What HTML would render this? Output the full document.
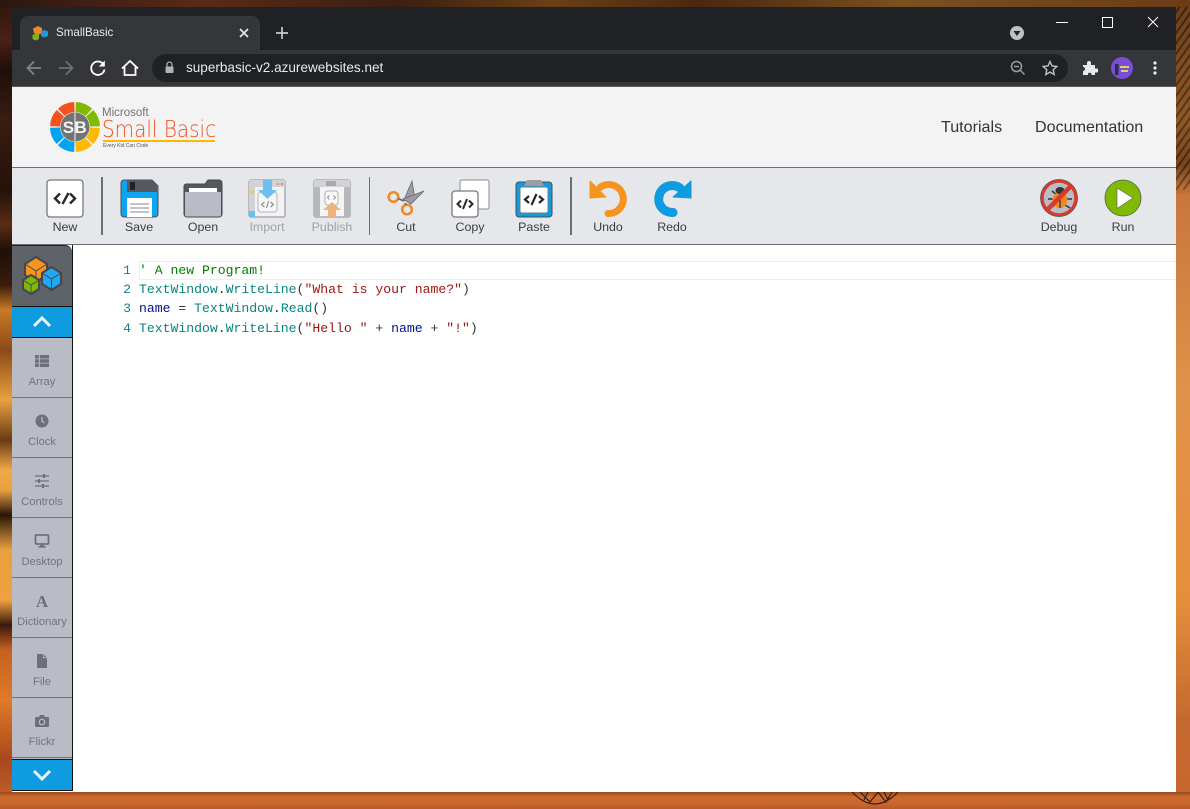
<!DOCTYPE html>
<html lang="en"><head><meta charset="utf-8"><title>SmallBasic</title>
<style>
html,body{margin:0;padding:0;width:1190px;height:809px;overflow:hidden;font-family:"Liberation Sans",sans-serif}
body{position:relative;background:#c8662e}
.a{position:absolute}
.lbl{position:absolute;top:220px;width:64px;text-align:center;font-size:12.4px;line-height:14px;color:#3a3d42}
.dis{color:#a0a2a6}
.sep{position:absolute;background:#6b6e73;top:177px;height:58px}
.item{position:absolute;left:12px;width:60px;height:59px;background:#b9bcc4;border-bottom:1px solid #70747c;text-align:center;color:#70747c;font-size:11.2px}
.item span{position:absolute;left:0;right:0;top:38px;line-height:13px}
.item svg{position:absolute;left:21px;top:15px}
.code{position:absolute;left:139px;font:13.14px/19px "Liberation Mono",monospace;white-space:pre;color:#333}
.num{position:absolute;left:100px;width:31px;text-align:right;font:13.14px/19px "Liberation Mono",monospace;color:#237893}
.g{color:#008000}.t{color:#098580}.s{color:#a31515}.n{color:#001188}
</style></head><body>
<!-- wallpaper -->
<div class="a" style="left:0;top:0;width:12px;height:809px;background:linear-gradient(#2a1710 0,#4a2016 40px,#1e0f0a 70px,#3a1c12 120px,#241209 190px,#5a2c14 225px,#1e0f0a 250px,#3a1c0c 285px,#c87a26 310px,#8a4a18 350px,#e8a040 400px,#6a3a14 440px,#f0a848 470px,#e8a040 490px,#2a1608 515px,#e8a040 550px,#f0a040 600px,#3a1a0c 625px,#c4621f 650px,#e07a28 700px,#a8481c 760px,#c8662e 809px)"></div>
<div class="a" style="left:1176px;top:0;width:14px;height:809px;background:linear-gradient(#4a2a14 0,#7a4a20 120px,#5a3014 165px,#c8763c 195px,#e2934a 400px,#e58e3a 600px,#c46a30 720px,#c8662e 809px)"></div>
<div class="a" style="left:1176px;top:0;width:14px;height:190px;background:repeating-linear-gradient(125deg,rgba(30,12,4,.3) 0 2px,rgba(230,150,70,.2) 2px 6px)"></div>
<div class="a" style="left:0;top:0;width:1190px;height:7px;background:linear-gradient(90deg,#2a1710,#5a2a18 200px,#3a2012 400px,#6a4016 550px,#4a2810 700px,#7a5020 900px,#6a3c18 1190px)"></div>
<div class="a" style="left:0;top:792px;width:1190px;height:17px;background:linear-gradient(#9a4a1c,#cc6c30 5px,#c8662e 12px,#b85a28)"></div>
<svg class="a" style="left:840px;top:792px" width="70" height="17"><path d="M12 0Q35 24 58 0M20 0l10 10 8-10 8 10 6-10M28 0l-4 8M44 0l4 8" fill="none" stroke="#3a1a10" stroke-width="1.200"/></svg>

<!-- browser chrome -->
<div class="a" style="left:12px;top:7px;width:1164px;height:43px;background:#202124"></div>
<div class="a" style="left:20px;top:16px;width:240px;height:34px;background:#35363a;border-radius:8px 8px 0 0"></div>
<svg class="a" style="left:31px;top:25px" width="18" height="16"><path d="M2 3.500l5-2.500 4 2v5l-4 2-4-2z" fill="#e88a2a"/><path d="M10 6.500l3.500-1.500 3.500 1.500v4.500l-3.500 1.500-3.500-1.500z" fill="#1c9ce0"/><path d="M1.500 10l3.200-1.500L8 10v4l-3.300 1.500L1.500 14z" fill="#7ab51d"/></svg>
<div class="a" style="left:56px;top:25px;font-size:11.600px;line-height:16px;color:#e8eaed">SmallBasic</div>
<svg class="a" style="left:238px;top:27px" width="12" height="12"><path d="M2 2l8 8M10 2l-8 8" stroke="#e8eaed" stroke-width="1.600"/></svg>
<svg class="a" style="left:275px;top:26px" width="14" height="14"><path d="M7 1v12M1 7h12" stroke="#c8cacd" stroke-width="1.700"/></svg>
<svg class="a" style="left:1010px;top:26px" width="14" height="14"><circle cx="7" cy="7" r="7" fill="#bdc1c6"/><path d="M3.500 5h7L7 10z" fill="#202124"/></svg>
<div class="a" style="left:1056px;top:22px;width:12px;height:1px;background:#fff"></div>
<div class="a" style="left:1102px;top:17px;width:9px;height:9px;border:1px solid #fff"></div>
<svg class="a" style="left:1147px;top:16px" width="12" height="12"><path d="M1 1l10 10M11 1l-10 10" stroke="#fff" stroke-width="1"/></svg>

<div class="a" style="left:12px;top:50px;width:1164px;height:36px;background:#35363a"></div>
<div class="a" style="left:12px;top:86px;width:1164px;height:1px;background:#5a5c60"></div>
<svg class="a" style="left:24px;top:58px" width="20" height="20"><path d="M17 10H4M10 3.500L3.500 10l6.500 6.500" fill="none" stroke="#808488" stroke-width="1.800"/></svg>
<svg class="a" style="left:56px;top:58px" width="20" height="20"><path d="M3 10h13M10 3.500l6.500 6.500-6.500 6.500" fill="none" stroke="#6d7074" stroke-width="1.800"/></svg>
<svg class="a" style="left:88px;top:58px" width="20" height="20"><path d="M15.500 6.500A6.700 6.700 0 1 0 16.500 11.500" fill="none" stroke="#fff" stroke-width="1.800"/><path d="M16.800 2.500v6h-6z" fill="#fff"/></svg>
<svg class="a" style="left:120px;top:58px" width="20" height="20"><path d="M2 10.500L10 3l8 7.500M4.500 9v8h11V9" fill="none" stroke="#fff" stroke-width="1.800"/></svg>
<div class="a" style="left:152px;top:54px;width:916px;height:28px;border-radius:14px;background:#202124"></div>
<svg class="a" style="left:164px;top:61px" width="11" height="13"><rect x="1.500" y="5.500" width="8" height="6.500" rx="1" fill="#b0b3b7"/><path d="M3 6V3.500a2.500 2.500 0 0 1 5 0V6" fill="none" stroke="#b0b3b7" stroke-width="1.200"/></svg>
<div class="a" style="left:186px;top:60px;font-size:13.55px;line-height:16px;color:#e8eaed">superbasic-v2.azurewebsites.net</div>
<svg class="a" style="left:1010px;top:60px" width="16" height="16"><circle cx="6.500" cy="6.500" r="5" fill="none" stroke="#9a9da1" stroke-width="1.500"/><path d="M4 6.500h5M10.500 10.500l4 4" stroke="#9a9da1" stroke-width="1.500"/></svg>
<svg class="a" style="left:1042px;top:60px" width="16" height="16"><path d="M8 1.500l2 4.500 4.800.5-3.600 3.200 1 4.800L8 12.100l-4.200 2.400 1-4.800L1.200 6.500 6 6z" fill="none" stroke="#bdc1c6" stroke-width="1.400"/></svg>
<svg class="a" style="left:1082px;top:60px" width="16" height="16"><path d="M1 5h4V3a2 2 0 0 1 4 0v2h4v3.500h1.500a2 2 0 0 1 0 4H13V15H9.500v-1a1.800 1.800 0 0 0-3.500 0v1H1v-4a2 2 0 0 0 0-4z" fill="#e8eaed"/></svg>
<svg class="a" style="left:1111px;top:57px" width="22" height="22"><circle cx="11" cy="11" r="11" fill="#7c4ddb"/><rect x="4" y="7" width="3.500" height="11" fill="#2c2f4a"/><rect x="9" y="9" width="9" height="2" fill="#d8d860"/><rect x="10" y="13" width="7" height="2" fill="#d8d860"/></svg>
<svg class="a" style="left:1152px;top:60px" width="6" height="16"><circle cx="3" cy="3" r="1.600" fill="#e8eaed"/><circle cx="3" cy="8" r="1.600" fill="#e8eaed"/><circle cx="3" cy="13" r="1.600" fill="#e8eaed"/></svg>

<!-- page header -->
<div class="a" style="left:12px;top:87px;width:1164px;height:80px;background:#f3f3f4"></div>
<svg class="a" style="left:50px;top:102px" width="50" height="50" viewBox="0 0 50 50">
<g fill="none" stroke-width="10" stroke-dasharray="14.400 111.260">
<circle cx="25" cy="25" r="20" stroke="#ffb900" transform="rotate(2 25 25)"/>
<circle cx="25" cy="25" r="20" stroke="#ffb900" transform="rotate(47 25 25)"/>
<circle cx="25" cy="25" r="20" stroke="#00a4ef" transform="rotate(92 25 25)"/>
<circle cx="25" cy="25" r="20" stroke="#00a4ef" transform="rotate(137 25 25)"/>
<circle cx="25" cy="25" r="20" stroke="#f4511e" transform="rotate(182 25 25)"/>
<circle cx="25" cy="25" r="20" stroke="#f4511e" transform="rotate(227 25 25)"/>
<circle cx="25" cy="25" r="20" stroke="#7fba00" transform="rotate(272 25 25)"/>
<circle cx="25" cy="25" r="20" stroke="#7fba00" transform="rotate(317 25 25)"/>
</g>
<circle cx="25" cy="25" r="14.500" fill="#737373"/>
<text x="25" y="31" text-anchor="middle" font-family="Liberation Sans" font-size="17" font-weight="bold" fill="#f3f3f4" letter-spacing="0.500">SB</text>
<path d="M25 11v28" stroke="#f3f3f4" stroke-width="1"/>
</svg>
<div class="a" style="left:102px;top:107px;font-size:11.500px;line-height:13px;color:#737373">Microsoft</div>
<div class="a" style="left:102px;top:114px;font:23.500px/30px 'DejaVu Sans',sans-serif;color:#f4511e;white-space:nowrap;transform-origin:0 0;transform:scaleX(.85);font-weight:200">Small Basic</div>
<div class="a" style="left:103px;top:140px;width:112px;height:2px;background:#ffb900"></div>
<div class="a" style="left:103px;top:143px;font-size:5px;line-height:6px;color:#555;white-space:nowrap">Every Kid Can Code</div>
<div class="a" style="left:941px;top:118px;font-size:16.100px;line-height:18px;color:#333">Tutorials</div>
<div class="a" style="left:1035px;top:118px;font-size:16.100px;line-height:18px;color:#333">Documentation</div>

<!-- toolbar -->
<div class="a" style="left:12px;top:167px;width:1164px;height:76px;background:#e5e7ea;border-top:1px solid #6b6e73;border-bottom:1px solid #6b6e73"></div>
<div class="sep" style="left:101px;width:2px"></div>
<div class="sep" style="left:369px;width:1px"></div>
<div class="sep" style="left:570px;width:2px"></div>

<svg class="a" style="left:0;top:167px" width="1190" height="60" viewBox="0 167 1190 60">
<!-- New -->
<rect x="47" y="180" width="36" height="37" rx="3" fill="#fff" stroke="#75787d" stroke-width="1.300"/>
<path d="M60 193.500l-5 5 5 5M70 193.500l5 5-5 5M68.500 193l-6 11" fill="none" stroke="#26282c" stroke-width="2.400"/>
<!-- Save -->
<path d="M124 180h28l6 6v28a3 3 0 0 1-3 3h-31a3 3 0 0 1-3-3v-31a3 3 0 0 1 3-3z" fill="#0ea5f0" stroke="#4b4e54"/>
<path d="M127 180h25l5 5.500V192h-30z" fill="#55585e"/><rect x="130" y="182" width="5" height="8" fill="#222"/>
<rect x="127" y="198" width="25" height="19" fill="#fff"/><path d="M130 204h19M130 208h19M130 212h19" stroke="#9a9da2" stroke-width="1.200"/>
<!-- Open -->
<path d="M186 184h19l3-4h11a3 3 0 0 1 3 3v31a3 3 0 0 1-3 3h-32a3 3 0 0 1-3-3v-27a3 3 0 0 1 2-3z" fill="#55585e" stroke="#44474c"/>
<rect x="189" y="188" width="28" height="4" fill="#fff"/>
<path d="M185 192h36v23a1.500 1.500 0 0 1-1.500 1.500h-33a1.500 1.500 0 0 1-1.500-1.500z" fill="#b9bcc4"/>
<!-- Import -->
<rect x="249" y="180" width="36" height="37" rx="2" fill="#f2f2f3" stroke="#a9abaf" stroke-width="1.500"/>
<rect x="249" y="180" width="36" height="7" fill="#d2d3d6"/><rect x="249" y="187" width="6" height="30" fill="#d2d3d6"/><rect x="249" y="211" width="6" height="6" fill="#6cc0ee"/><rect x="250" y="190" width="4" height="4" fill="#edc488"/><circle cx="278" cy="184" r="1.300" fill="#d8a0a0"/><circle cx="282" cy="184" r="1.300" fill="#e08a8a"/>
<rect x="258" y="192" width="19" height="20" rx="3" fill="#f7f7f8" stroke="#b5b7bb"/>
<path d="M263 180h9v10h5l-9.500 9-9.500-9h5z" fill="#6cc0ee"/>
<path d="M264.500 202l-3 2.500 3 2.500M270.500 202l3 2.500-3 2.500M268.500 201l-2 7" fill="none" stroke="#8d8f93" stroke-width="1.200"/>
<!-- Publish -->
<rect x="314" y="180" width="36" height="37" rx="2" fill="#f4f4f5" stroke="#a9abaf" stroke-width="1.500"/>
<rect x="314" y="180" width="36" height="7" fill="#d2d3d6"/><rect x="326" y="181" width="10" height="5" fill="#a8aaae"/><rect x="314" y="187" width="6" height="30" fill="#b5b7ba"/><rect x="344" y="187" width="6" height="30" fill="#b5b7ba"/>
<rect x="325" y="191" width="13" height="14" rx="3" fill="#fbfbfc" stroke="#b0b2b6"/>
<path d="M329.500 195.500l-2 2 2 2M333.500 195.500l2 2-2 2" fill="none" stroke="#8d8f93" stroke-width="1"/>
<path d="M332 202l9 8h-5v7h-8v-7h-5z" fill="#edb47d"/>
<!-- Cut -->
<path d="M403.500 201L412 181l2.500 15z" fill="#9b9da2" stroke="#66696e" stroke-width=".8"/>
<path d="M403 199l21-8-13 13z" fill="#9b9da2" stroke="#66696e" stroke-width=".8"/>
<circle cx="393.500" cy="197" r="4.800" fill="#e5e7ea" stroke="#ee8a1f" stroke-width="2.500"/>
<circle cx="407" cy="209.500" r="4.800" fill="#e5e7ea" stroke="#ee8a1f" stroke-width="2.500"/>
<path d="M398 198.500l6 2.500M405 203l1 2" stroke="#66696e" stroke-width="1.500"/>
<!-- Copy -->
<rect x="460" y="180" width="29" height="29" rx="2" fill="#fff" stroke="#888b90"/>
<rect x="452" y="191" width="26" height="26" rx="3" fill="#fff" stroke="#75787d" stroke-width="1.300"/>
<path d="M461 200.500l-3.500 3.500 3.500 3.500M469 200.500l3.500 3.500-3.500 3.500M467 199l-4 10" fill="none" stroke="#26282c" stroke-width="2"/>
<!-- Paste -->
<rect x="516" y="182" width="36" height="35" rx="3" fill="#0f9be0" stroke="#4b4e54"/>
<rect x="520" y="187" width="28" height="26" rx="2" fill="#fff" stroke="#75787d"/>
<path d="M524 186l3-6h14l3 6z" fill="#9a9da2"/>
<path d="M529 196l-4 3.500 4 3.500M539 196l4 3.500-4 3.500M536.500 194l-5 11" fill="none" stroke="#26282c" stroke-width="2.200"/>
<!-- Undo -->
<path d="M600 187.500A14.500 14.500 0 1 1 608 213.500" fill="none" stroke="#f7941d" stroke-width="7" stroke-linecap="round"/>
<path d="M590 181l16 16-16 1z" fill="#f7941d" stroke="#f7941d" stroke-linejoin="round"/>
<!-- Redo -->
<path d="M680 188A13.500 13.500 0 1 0 673 212.500" fill="none" stroke="#0f9be0" stroke-width="9" stroke-linecap="round"/>
<path d="M691 181l-18 16 18 1z" fill="#0f9be0" stroke="#0f9be0" stroke-linejoin="round"/>
<!-- Debug -->
<circle cx="1059" cy="198" r="17" fill="#b9bcc4" stroke="#d93a2b" stroke-width="3.500"/>
<circle cx="1059" cy="198" r="18.500" fill="none" stroke="#55585e" stroke-width=".7"/>
<path d="M1052 191l5 4M1068 191l-5 4M1048 199h6M1072 199h-6M1050 208l5-3M1070 208l-5-3" stroke="#333" stroke-width="1.500"/>
<ellipse cx="1060" cy="200" rx="7.500" ry="8" fill="#ee8a1f"/><ellipse cx="1060" cy="190.500" rx="4.500" ry="3.500" fill="#333"/>
<path d="M1060 193v15" stroke="#333" stroke-width="1.300"/>
<path d="M1047 210l24-24" stroke="#d93a2b" stroke-width="4.500"/>
<!-- Run -->
<circle cx="1123" cy="198" r="18" fill="#7fba00" stroke="#55585e" stroke-width=".8"/>
<path d="M1117 188l16 10-16 10.500z" fill="#fff" stroke="#66696e" stroke-width=".7"/>
</svg>

<div class="lbl" style="left:33px">New</div>
<div class="lbl" style="left:107px">Save</div>
<div class="lbl" style="left:171px">Open</div>
<div class="lbl dis" style="left:235px">Import</div>
<div class="lbl dis" style="left:300px">Publish</div>
<div class="lbl" style="left:374px">Cut</div>
<div class="lbl" style="left:438px">Copy</div>
<div class="lbl" style="left:502px">Paste</div>
<div class="lbl" style="left:576px">Undo</div>
<div class="lbl" style="left:640px">Redo</div>
<div class="lbl" style="left:1027px">Debug</div>
<div class="lbl" style="left:1091px">Run</div>

<!-- editor -->
<div class="a" style="left:12px;top:245px;width:1164px;height:547px;background:#fff"></div>
<div class="a" style="left:139px;top:261px;width:1036px;height:17px;border:1px solid #eeeeee;border-right:0"></div>
<div class="num" style="top:261px">1</div><div class="code g" style="top:261px">' A new Program!</div>
<div class="num" style="top:280px">2</div><div class="code" style="top:280px"><span class="t">TextWindow</span>.<span class="t">WriteLine</span>(<span class="s">"What is your name?"</span>)</div>
<div class="num" style="top:299px">3</div><div class="code" style="top:299px"><span class="n">name</span> = <span class="t">TextWindow</span>.<span class="t">Read</span>()</div>
<div class="num" style="top:319px">4</div><div class="code" style="top:319px"><span class="t">TextWindow</span>.<span class="t">WriteLine</span>(<span class="s">"Hello "</span> + <span class="n">name</span> + <span class="s">"!"</span>)</div>

<!-- sidebar -->
<div class="a" style="left:12px;top:245px;width:60px;height:61px;background:#5e6269;border-top-right-radius:7px;border-top:1px solid #222;box-sizing:border-box"></div>
<svg class="a" style="left:22px;top:255px" width="42" height="42" viewBox="0 0 42 42">
<g stroke="#44474c" stroke-linejoin="round">
<path d="M3 9L14 2l11 7v11l-11 7-11-7z" fill="#f7941d" stroke-width="2"/><path d="M3 9l11 7 11-7M14 16v11" fill="none" stroke-width="1"/>
<path d="M20 18l9.500-6 9.500 6v11l-9.500 6-9.500-6z" fill="#1fa9f5" stroke-width="2"/><path d="M20 18l9.500 6 9.500-6M29.500 24v11" fill="none" stroke-width="1"/>
<path d="M1 25l8-5 8 5v9l-8 5-8-5z" fill="#7fba00" stroke-width="2"/><path d="M1 25l8 5 8-5M9 30v9" fill="none" stroke-width="1"/>
</g>
</svg>
<div class="a" style="left:12px;top:306px;width:60px;height:30px;background:#0f9be0;border-top:1px solid #111;border-bottom:1px solid #111"></div>
<svg class="a" style="left:32px;top:315px" width="20" height="13"><path d="M2 11l8-8 8 8" fill="none" stroke="#e9f3f9" stroke-width="3"/></svg>

<div class="item" style="top:338px"><svg width="18" height="16"><path d="M2 2h3.800v3.500H2zM6.800 2H16v3.500H6.800zM2 6.300h3.800v3.500H2zM6.800 6.300H16v3.500H6.800zM2 10.500h3.800V14H2zM6.800 10.500H16V14H6.800z" fill="#6d7078"/></svg><span>Array</span></div>
<div class="item" style="top:398px"><svg width="18" height="16"><circle cx="9" cy="8" r="6.500" fill="#6d7078"/><path d="M9 4v4.500l2.500 1.500" fill="none" stroke="#b9bcc4" stroke-width="1.300"/></svg><span>Clock</span></div>
<div class="item" style="top:458px"><svg width="18" height="16"><path d="M2 3h14M2 8h14M2 13h14" stroke="#6d7078" stroke-width="1.300"/><path d="M11 1v4M6 6v4M10 11v4" stroke="#6d7078" stroke-width="2"/></svg><span>Controls</span></div>
<div class="item" style="top:518px"><svg width="18" height="16"><rect x="2.500" y="2" width="13" height="9" rx="1" fill="none" stroke="#6d7078" stroke-width="1.800"/><path d="M7.500 12v1.500h3V12" fill="#6d7078" stroke="#6d7078"/><path d="M5 14h8" stroke="#6d7078" stroke-width="1.300"/></svg><span>Desktop</span></div>
<div class="item" style="top:578px"><svg width="18" height="16"><text x="9" y="14" text-anchor="middle" font-family="Liberation Serif" font-weight="bold" font-size="17" fill="#6d7078">A</text></svg><span>Dictionary</span></div>
<div class="item" style="top:638px"><svg width="18" height="16"><path d="M4 1h6.500L14 4.500V15H4z" fill="#6d7078"/><path d="M10.300 1v3.700H14" fill="none" stroke="#b9bcc4" stroke-width=".8"/></svg><span>File</span></div>
<div class="item" style="top:698px"><svg width="18" height="16"><path d="M3 4h3l1-2h4l1 2h3a1 1 0 0 1 1 1v8a1 1 0 0 1-1 1H3a1 1 0 0 1-1-1V5a1 1 0 0 1 1-1z" fill="#6d7078"/><circle cx="9" cy="9" r="2.700" fill="none" stroke="#b9bcc4" stroke-width="1.200"/></svg><span>Flickr</span></div>
<div class="a" style="left:12px;top:758px;width:60px;height:1px;background:#b9bcc4"></div>
<div class="a" style="left:12px;top:759px;width:60px;height:30px;background:#0f9be0;border-top:1px solid #111;border-bottom:1px solid #111"></div>
<svg class="a" style="left:32px;top:768px" width="20" height="13"><path d="M2 3l8 8 8-8" fill="none" stroke="#e9f3f9" stroke-width="3"/></svg>
<div class="a" style="left:72px;top:245px;width:1px;height:546px;background:#111"></div>
</body></html>
